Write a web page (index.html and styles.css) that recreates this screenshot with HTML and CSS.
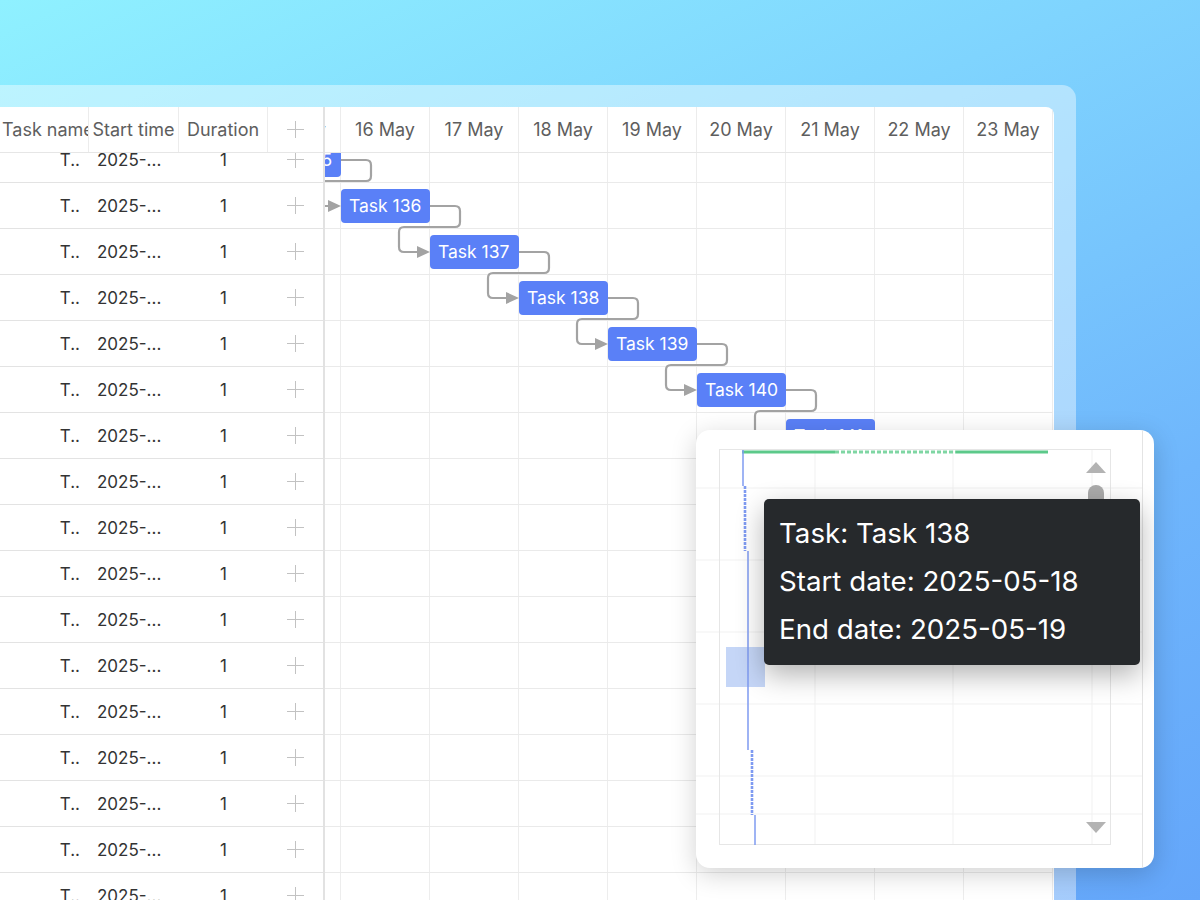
FILE: index.html
```html
<!DOCTYPE html>
<html lang="en">
<head>
  <meta charset="UTF-8">
  <title>Gantt Minimap</title>
  <link rel="stylesheet" href="styles.css">
</head>
<body>

  <div class="frame">
    <div class="card">

      <!-- Left grid -->
      <div class="grid">
        <div class="head">
          <div class="hcell c-name">Task name</div>
          <div class="hcell c-start">Start time</div>
          <div class="hcell c-dur">Duration</div>
          <div class="hcell c-add"><span class="plus"></span></div>
        </div>
        <div class="body">
          <div class="rows">
            <div class="row"><div class="c-name">T..</div><div class="c-start">2025-...</div><div class="c-dur">1</div><div class="c-add"><span class="plus"></span></div></div>
            <div class="row"><div class="c-name">T..</div><div class="c-start">2025-...</div><div class="c-dur">1</div><div class="c-add"><span class="plus"></span></div></div>
            <div class="row"><div class="c-name">T..</div><div class="c-start">2025-...</div><div class="c-dur">1</div><div class="c-add"><span class="plus"></span></div></div>
            <div class="row"><div class="c-name">T..</div><div class="c-start">2025-...</div><div class="c-dur">1</div><div class="c-add"><span class="plus"></span></div></div>
            <div class="row"><div class="c-name">T..</div><div class="c-start">2025-...</div><div class="c-dur">1</div><div class="c-add"><span class="plus"></span></div></div>
            <div class="row"><div class="c-name">T..</div><div class="c-start">2025-...</div><div class="c-dur">1</div><div class="c-add"><span class="plus"></span></div></div>
            <div class="row"><div class="c-name">T..</div><div class="c-start">2025-...</div><div class="c-dur">1</div><div class="c-add"><span class="plus"></span></div></div>
            <div class="row"><div class="c-name">T..</div><div class="c-start">2025-...</div><div class="c-dur">1</div><div class="c-add"><span class="plus"></span></div></div>
            <div class="row"><div class="c-name">T..</div><div class="c-start">2025-...</div><div class="c-dur">1</div><div class="c-add"><span class="plus"></span></div></div>
            <div class="row"><div class="c-name">T..</div><div class="c-start">2025-...</div><div class="c-dur">1</div><div class="c-add"><span class="plus"></span></div></div>
            <div class="row"><div class="c-name">T..</div><div class="c-start">2025-...</div><div class="c-dur">1</div><div class="c-add"><span class="plus"></span></div></div>
            <div class="row"><div class="c-name">T..</div><div class="c-start">2025-...</div><div class="c-dur">1</div><div class="c-add"><span class="plus"></span></div></div>
            <div class="row"><div class="c-name">T..</div><div class="c-start">2025-...</div><div class="c-dur">1</div><div class="c-add"><span class="plus"></span></div></div>
            <div class="row"><div class="c-name">T..</div><div class="c-start">2025-...</div><div class="c-dur">1</div><div class="c-add"><span class="plus"></span></div></div>
            <div class="row"><div class="c-name">T..</div><div class="c-start">2025-...</div><div class="c-dur">1</div><div class="c-add"><span class="plus"></span></div></div>
            <div class="row"><div class="c-name">T..</div><div class="c-start">2025-...</div><div class="c-dur">1</div><div class="c-add"><span class="plus"></span></div></div>
            <div class="row"><div class="c-name">T..</div><div class="c-start">2025-...</div><div class="c-dur">1</div><div class="c-add"><span class="plus"></span></div></div>
          </div>
        </div>
      </div>

      <div class="split"></div>

      <!-- Timeline -->
      <div class="chart">
        <div class="chart-inner">
          <div class="head">
            <div class="hcell day">15 May</div>
            <div class="hcell day">16 May</div>
            <div class="hcell day">17 May</div>
            <div class="hcell day">18 May</div>
            <div class="hcell day">19 May</div>
            <div class="hcell day">20 May</div>
            <div class="hcell day">21 May</div>
            <div class="hcell day">22 May</div>
            <div class="hcell day">23 May</div>
          </div>
          <div class="body lanes-body">
            <div class="rows">
              <div class="lane"><div class="bar" style="margin-left: 0px">Task 135</div></div>
              <div class="lane"><div class="bar" style="margin-left: 89px">Task 136</div></div>
              <div class="lane"><div class="bar" style="margin-left: 178px">Task 137</div></div>
              <div class="lane"><div class="bar" style="margin-left: 267px">Task 138</div></div>
              <div class="lane"><div class="bar" style="margin-left: 356px">Task 139</div></div>
              <div class="lane"><div class="bar" style="margin-left: 445px">Task 140</div></div>
              <div class="lane"><div class="bar" style="margin-left: 534px">Task 141</div></div>
              <div class="lane"><div class="bar" style="margin-left: 623px">Task 142</div></div>
              <div class="lane"><div class="bar" style="margin-left: 712px">Task 143</div></div>
              <div class="lane"></div>
              <div class="lane"></div>
              <div class="lane"></div>
              <div class="lane"></div>
              <div class="lane"></div>
              <div class="lane"></div>
              <div class="lane"></div>
              <div class="lane"></div>
            </div>
          </div>
        </div>

        <!-- Dependency links -->
        <svg class="links" width="728" height="793" viewBox="325 107 728 793">
          <g fill="none" stroke="#a3a3a3" stroke-width="2.2">
            <path d="M341 160 H366 Q371 160 371 165 V176 Q371 181 366 181 H315 Q310 181 310 186 V201 Q310 206 315 206 H329"/>
            <path d="M430 206 H455 Q460 206 460 211 V222 Q460 227 455 227 H404 Q399 227 399 232 V247 Q399 252 404 252 H418"/>
            <path d="M519 252 H544 Q549 252 549 257 V268 Q549 273 544 273 H493 Q488 273 488 278 V293 Q488 298 493 298 H507"/>
            <path d="M608 298 H633 Q638 298 638 303 V314 Q638 319 633 319 H582 Q577 319 577 324 V339 Q577 344 582 344 H596"/>
            <path d="M697 344 H722 Q727 344 727 349 V360 Q727 365 722 365 H671 Q666 365 666 370 V385 Q666 390 671 390 H685"/>
            <path d="M786 390 H811 Q816 390 816 395 V406 Q816 411 811 411 H760 Q755 411 755 416 V431 Q755 436 760 436 H774"/>
            <path d="M875 436 H900 Q905 436 905 441 V452 Q905 457 900 457 H849 Q844 457 844 462 V477 Q844 482 849 482 H863"/>
            <path d="M964 482 H989 Q994 482 994 487 V498 Q994 503 989 503 H938 Q933 503 933 508 V523 Q933 528 938 528 H952"/>
          </g>
          <g fill="#a3a3a3">
            <polygon points="328,200 341,206 328,212"/>
            <polygon points="417,246 430,252 417,258"/>
            <polygon points="506,292 519,298 506,304"/>
            <polygon points="595,338 608,344 595,350"/>
            <polygon points="684,384 697,390 684,396"/>
            <polygon points="773,430 786,436 773,442"/>
            <polygon points="862,476 875,482 862,488"/>
            <polygon points="951,522 964,528 951,534"/>
          </g>
        </svg>
      </div>

    </div>
  </div>

  <!-- Minimap popup -->
  <div class="popup">
    <svg class="minimap" width="458" height="438" viewBox="696 430 458 438">
      <g stroke="#f1f1f1" stroke-width="1">
        <line x1="696" y1="488" x2="1142" y2="488"/>
        <line x1="696" y1="560" x2="1142" y2="560"/>
        <line x1="696" y1="632" x2="1142" y2="632"/>
        <line x1="696" y1="704" x2="1142" y2="704"/>
        <line x1="696" y1="776" x2="1142" y2="776"/>
        <line x1="696" y1="814" x2="1142" y2="814"/>
        <line x1="815" y1="450" x2="815" y2="845"/>
        <line x1="953" y1="450" x2="953" y2="845"/>
        <line x1="1092" y1="450" x2="1092" y2="845"/>
      </g>
      <line x1="1142.5" y1="430" x2="1142.5" y2="868" stroke="#e4e4e4"/>
      <rect x="719.5" y="449.5" width="391" height="395" fill="none" stroke="#e6e6e6"/>
      <line x1="742" y1="452" x2="835" y2="452" stroke="#5cc98a" stroke-width="3"/>
      <line x1="835" y1="452" x2="956" y2="452" stroke="#7fd6a3" stroke-width="3" stroke-dasharray="4 2"/>
      <line x1="956" y1="452" x2="1048" y2="452" stroke="#5cc98a" stroke-width="3"/>
      <rect x="726" y="647" width="39" height="40" fill="#c5d6f7"/>
      <g fill="none" stroke="#7f9bf1" stroke-width="1.5">
        <path d="M743 450 V486 M748 551 V750 M755 815 V845"/>
      </g>
      <g fill="none" stroke="#7f9bf1" stroke-width="2.6" stroke-dasharray="3 1">
        <path d="M745 486 V551 M752 750 V815"/>
      </g>
      <polygon points="1086,473 1106,473 1096,462" fill="#b3b3b3"/>
      <rect x="1088" y="485" width="16" height="40" rx="8" fill="#aaaaaa"/>
      <polygon points="1086,822 1106,822 1096,833" fill="#b3b3b3"/>
    </svg>

    <div class="tip">
      <div>Task: Task 138</div>
      <div>Start date: 2025-05-18</div>
      <div>End date: 2025-05-19</div>
    </div>
  </div>

</body>
</html>
```

FILE: styles.css
```css
/* Reset */
* {
  margin: 0;
  padding: 0;
  box-sizing: border-box;
}

body {
  width: 1200px;
  height: 900px;
  overflow: hidden;
  position: relative;
  font-family: Inter, "Noto Sans", sans-serif;
  background: linear-gradient(155deg, #8ff1ff 0%, #7fd4fe 35%, #6fb6fc 70%, #64a6fa 100%);
}

/* Translucent frame around the gantt */
.frame {
  margin-top: 85px;
  width: 1076px;
  height: 815px;
  padding: 22px 22px 0 0;
  background: rgba(255, 255, 255, 0.42);
  border-top-right-radius: 14px;
}

.card {
  height: 100%;
  background: #fff;
  border-top-right-radius: 8px;
  display: flex;
  overflow: hidden;
}

/* Left grid */
.grid {
  width: 323px;
  display: flex;
  flex-direction: column;
}

.split {
  width: 2px;
  background: #e2e2e2;
}

.head {
  height: 46px;
  flex-shrink: 0;
  display: flex;
  border-bottom: 1px solid #e6e6e6;
  color: #5e5e5e;
  font-size: 18px;
}

.hcell {
  display: flex;
  align-items: center;
  justify-content: center;
  white-space: nowrap;
  overflow: hidden;
  border-right: 1px solid #ececec;
}

.head .c-name {
  justify-content: flex-start;
  padding-left: 2px;
}

.head .c-add {
  border-right: none;
}

.c-name { width: 89px; }
.c-start { width: 90px; }
.c-dur { width: 89px; }
.c-add { width: 55px; }

.body {
  flex: 1;
  overflow: hidden;
}

/* rows are scrolled a bit under the header */
.rows {
  margin-top: -16px;
}

.row {
  height: 46px;
  display: flex;
  align-items: center;
  border-bottom: 1px solid #e3e3e3;
  font-size: 17px;
  color: #333;
}

.row .c-name {
  text-align: right;
  padding-right: 9px;
}

.row .c-start {
  padding-left: 8px;
  white-space: nowrap;
}

.row .c-dur {
  text-align: center;
}

.c-add {
  display: flex;
  justify-content: center;
  align-items: center;
}

.plus {
  position: relative;
  width: 17px;
  height: 17px;
}

.plus:before,
.plus:after {
  content: '';
  position: absolute;
  background: #c2c2c2;
}

.plus:before {
  left: 8px;
  top: 0;
  width: 1.4px;
  height: 17px;
}

.plus:after {
  top: 8px;
  left: 0;
  height: 1.4px;
  width: 17px;
}

/* Timeline */
.chart {
  flex: 1;
  overflow: hidden;
  position: relative;
}

.chart-inner {
  margin-left: -73px;
  width: 801px;
  height: 100%;
  display: flex;
  flex-direction: column;
}

.day {
  width: 89px;
}

.lanes-body {
  background: repeating-linear-gradient(to right, transparent 0 88px, #ededed 88px 89px);
}

.lane {
  height: 46px;
  display: flex;
  align-items: center;
  border-bottom: 1px solid #eaeaea;
}

.bar {
  flex-shrink: 0;
  width: 89px;
  height: 34px;
  line-height: 34px;
  padding-left: 8px;
  border-radius: 4px;
  background: #5a80f7;
  color: #fff;
  font-size: 17.5px;
  white-space: nowrap;
  overflow: hidden;
}

.links {
  position: absolute;
  top: 0;
  left: 0;
  pointer-events: none;
}

/* Minimap popup */
.popup {
  position: absolute;
  left: 696px;
  top: 430px;
  width: 458px;
  height: 438px;
  background: #fff;
  border-radius: 14px;
  box-shadow: 0px 6px 26px rgba(0, 0, 0, 0.18);
  overflow: hidden;
}

.minimap {
  display: block;
}

.tip {
  position: absolute;
  left: 68px;
  top: 69px;
  width: 376px;
  height: 166px;
  padding: 10px 15px;
  background: #26292c;
  border-radius: 5px;
  color: #fff;
  font-size: 27.7px;
  line-height: 48px;
  white-space: nowrap;
  box-shadow: 0px 10px 28px rgba(0, 0, 0, 0.3);
}
```
